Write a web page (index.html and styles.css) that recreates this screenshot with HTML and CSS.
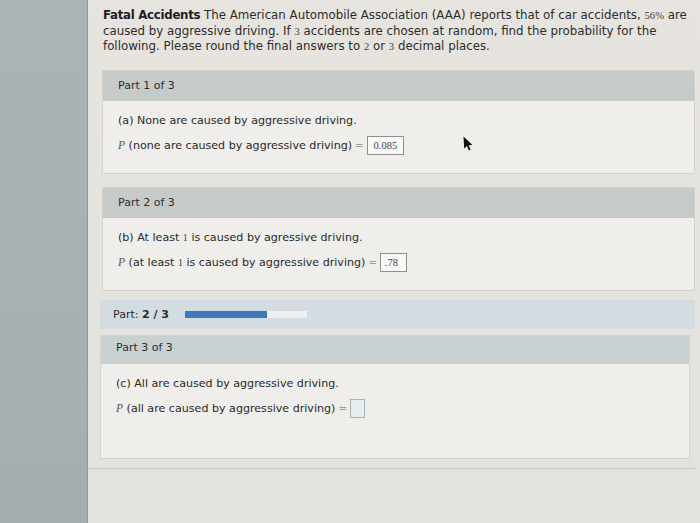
FILE: index.html
```html
<!DOCTYPE html>
<html>
<head>
<meta charset="utf-8">
<link rel="stylesheet" href="styles.css">
</head>
<body>
<div class="page">
  <aside class="sidebar"></aside>
  <main class="main">
    <p class="question"><b>Fatal Accidents</b> The American Automobile Association (AAA) reports that of car accidents, <span class="num">56%</span> are caused by aggressive driving. If <span class="num">3</span> accidents are chosen at random, find the probability for the following. Please round the final answers to <span class="num">2</span> or <span class="num">3</span> decimal places.</p>

    <section class="part part-one">
      <div class="part-head">Part 1 of 3</div>
      <div class="part-body">
        <p class="prompt">(a) None are caused by aggressive driving.</p>
        <p class="eq"><span class="pv">P</span> (none are caused by aggressive driving)<span class="eqs">=</span><span class="ans">0.085</span></p>
      </div>
    </section>

    <section class="part part-two">
      <div class="part-head">Part 2 of 3</div>
      <div class="part-body">
        <p class="prompt">(b) At least <span class="num">1</span> is caused by agressive driving.</p>
        <p class="eq"><span class="pv">P</span> (at least <span class="num">1</span> is caused by aggressive driving)<span class="eqs">=</span><span class="ans ans-short">.78</span></p>
      </div>
    </section>

    <div class="progress">
      <span class="progress-label">Part: <b>2 / 3</b></span>
      <div class="track"><div class="fill" style="width:67%"></div></div>
    </div>

    <section class="part part-three">
      <div class="part-head">Part 3 of 3</div>
      <div class="part-body">
        <p class="prompt">(c) All are caused by aggressive driving.</p>
        <p class="eq"><span class="pv">P</span> (all are caused by aggressive driving)<span class="eqs">=</span><span class="ans ans-empty"></span></p>
      </div>
    </section>
    <div class="rule"></div>
  </main>
  <svg class="cursor" width="12" height="16" viewBox="0 0 12 16">
    <path d="M1.5 0.5 L10.5 9 L6.6 9.2 L8.6 13.6 L6.9 14.4 L5 10 L2.2 12.6 Z" fill="#111"/>
  </svg>
</div>
</body>
</html>
```

FILE: styles.css
```css
html, body {
  margin: 0;
  padding: 0;
}
body {
  width: 700px;
  height: 523px;
  overflow: hidden;
  font-family: "DejaVu Sans", Verdana, sans-serif;
  color: #2a2a2a;
  background: #e3e1dc;
}
.page {
  position: relative;
  display: flex;
  height: 523px;
}
.sidebar {
  width: 87px;
  flex: none;
  background: linear-gradient(180deg, #aab4b6 0%, #a7b1b3 60%, #a4aeaf 100%);
  border-right: 1px solid #8f999b;
}
.main {
  flex: 1;
  min-width: 0;
  padding: 8px 5px 0 14px;
  background: linear-gradient(180deg, #e7e4df 0%, #e3e2dd 100%);
}
.question {
  margin: 0;
  padding-left: 1px;
  width: 591px;
  font-size: 11.8px;
  line-height: 15.6px;
  color: #2c2c2c;
}
.question b {
  color: #1e1e1e;
  letter-spacing: -0.3px;
}
.num {
  font-family: "Liberation Serif", "Times New Roman", serif;
  font-size: 0.9em;
  color: #444;
}
.part {
  border: 1px solid #d2d2ce;
}
.part-one {
  margin-top: 15px;
}
.part-two {
  margin-top: 13px;
}
.part-three {
  margin-top: 6px;
}
.part-head {
  background: #c6cac9;
  height: 30px;
  line-height: 30px;
  padding-left: 15px;
  font-size: 11px;
  color: #2e2e2e;
}
.part-three .part-head {
  background: #c9d0d2;
  height: 28px;
  line-height: 24px;
}
.part-body {
  background: #efeeea;
  padding: 12px 0 0 15px;
  height: 60px;
  font-size: 11.1px;
  color: #2a2a2a;
}
.part-three .part-body {
  height: 82px;
}
.prompt {
  margin: 0;
  line-height: 15px;
}
.eq {
  margin: 8px 0 0;
  line-height: 19px;
  white-space: nowrap;
}
.pv {
  font-family: "Liberation Serif", "Times New Roman", serif;
  font-style: italic;
  font-size: 11.5px;
  color: #555;
}
.eqs {
  color: #9a9a9a;
  margin: 0 3px 0 3px;
  font-size: 10px;
}
.ans {
  display: inline-block;
  vertical-align: middle;
  border: 1px solid #8e8e8e;
  background: #f8f8f6;
  height: 17px;
  line-height: 17px;
  padding: 0 6px 0 6px;
  font-family: "Liberation Serif", "Times New Roman", serif;
  font-size: 10.5px;
  color: #444;
}
.ans-short {
  padding: 0 8px 0 4px;
}
.ans-empty {
  width: 13px;
  padding: 0;
  border-color: #aab2b4;
  background: #e4eef0;
}
.progress {
  margin-top: 9px;
  margin-left: -2px;
  height: 29px;
  display: flex;
  align-items: center;
  background: #d3dde1;
  padding-left: 13px;
  font-size: 11px;
  color: #2a2a2a;
}
.track {
  margin-left: 16px;
  width: 122px;
  height: 7px;
  background: #eef0ef;
}
.fill {
  height: 100%;
  background: #3d79b7;
}
.part-three {
  margin-left: -2px;
  margin-right: 5px;
}
.rule {
  margin-top: 9px;
  margin-left: -14px;
  border-top: 1px solid #c8c9c4;
}
.cursor {
  position: absolute;
  left: 462px;
  top: 136px;
}
```
